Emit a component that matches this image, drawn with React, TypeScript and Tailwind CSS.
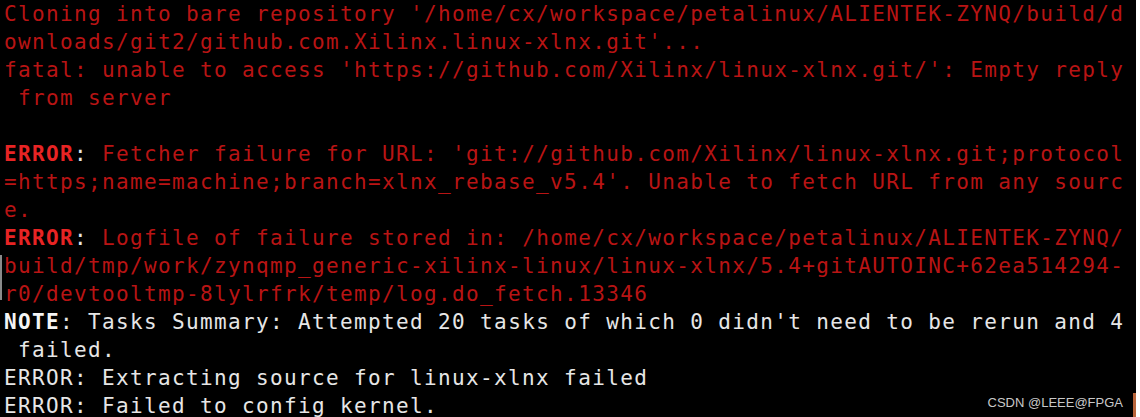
import React from 'react';

type Line = { tag?: string; tagColor?: 'red' | 'white'; text: string; color: 'red' | 'white' };

const lines: Line[] = [
  { text: "Cloning into bare repository '/home/cx/workspace/petalinux/ALIENTEK-ZYNQ/build/d", color: 'red' },
  { text: "ownloads/git2/github.com.Xilinx.linux-xlnx.git'...", color: 'red' },
  { text: "fatal: unable to access 'https://github.com/Xilinx/linux-xlnx.git/': Empty reply", color: 'red' },
  { text: ' from server', color: 'red' },
  { text: '', color: 'red' },
  { tag: 'ERROR', tagColor: 'red', text: " Fetcher failure for URL: 'git://github.com/Xilinx/linux-xlnx.git;protocol", color: 'red' },
  { text: "=https;name=machine;branch=xlnx_rebase_v5.4'. Unable to fetch URL from any sourc", color: 'red' },
  { text: 'e.', color: 'red' },
  { tag: 'ERROR', tagColor: 'red', text: ' Logfile of failure stored in: /home/cx/workspace/petalinux/ALIENTEK-ZYNQ/', color: 'red' },
  { text: 'build/tmp/work/zynqmp_generic-xilinx-linux/linux-xlnx/5.4+gitAUTOINC+62ea514294-', color: 'red' },
  { text: 'r0/devtooltmp-8lylrfrk/temp/log.do_fetch.13346', color: 'red' },
  { tag: 'NOTE', tagColor: 'white', text: " Tasks Summary: Attempted 20 tasks of which 0 didn't need to be rerun and 4", color: 'white' },
  { text: ' failed.', color: 'white' },
  { text: 'ERROR: Extracting source for linux-xlnx failed', color: 'white' },
  { text: 'ERROR: Failed to config kernel.', color: 'white' },
];

const textColor = { red: 'text-[#b81414]', white: 'text-[#e6e6e6]' };
const tagColor = { red: 'text-[#e82424]', white: 'text-[#f4f4f4]' };

export default function App() {
  return (
    <div className="flex w-[1140px] h-[417px] bg-white overflow-hidden">
      <div className="relative flex-1 bg-black overflow-hidden">
        <div className="absolute left-0 top-[255px] w-[2px] h-[45px] bg-[#8a8a8a]" />
        <div className="pl-[4px] font-['DejaVu_Sans_Mono',monospace] text-[21px] leading-[28px] tracking-[1.36px]">
          {lines.map((l, i) => (
            <div key={i} className={`h-[28px] whitespace-pre ${textColor[l.color]}`}>
              {l.tag && (
                <>
                  <span className={`font-bold ${tagColor[l.tagColor ?? 'red']}`}>{l.tag}</span>
                  <span className="text-[#e6e6e6]">:</span>
                </>
              )}
              {l.text}
            </div>
          ))}
        </div>
        <div className="absolute right-[13px] bottom-[6px] font-['Liberation_Sans',sans-serif] text-[13px] leading-[16px] text-[#c8c8c8]">
          CSDN @LEEE@FPGA
        </div>
        <div className="absolute right-0 bottom-0 w-[3px] h-[24px] bg-[#b8643a]" />
      </div>
      <div className="w-[4px] bg-white" />
    </div>
  );
}
